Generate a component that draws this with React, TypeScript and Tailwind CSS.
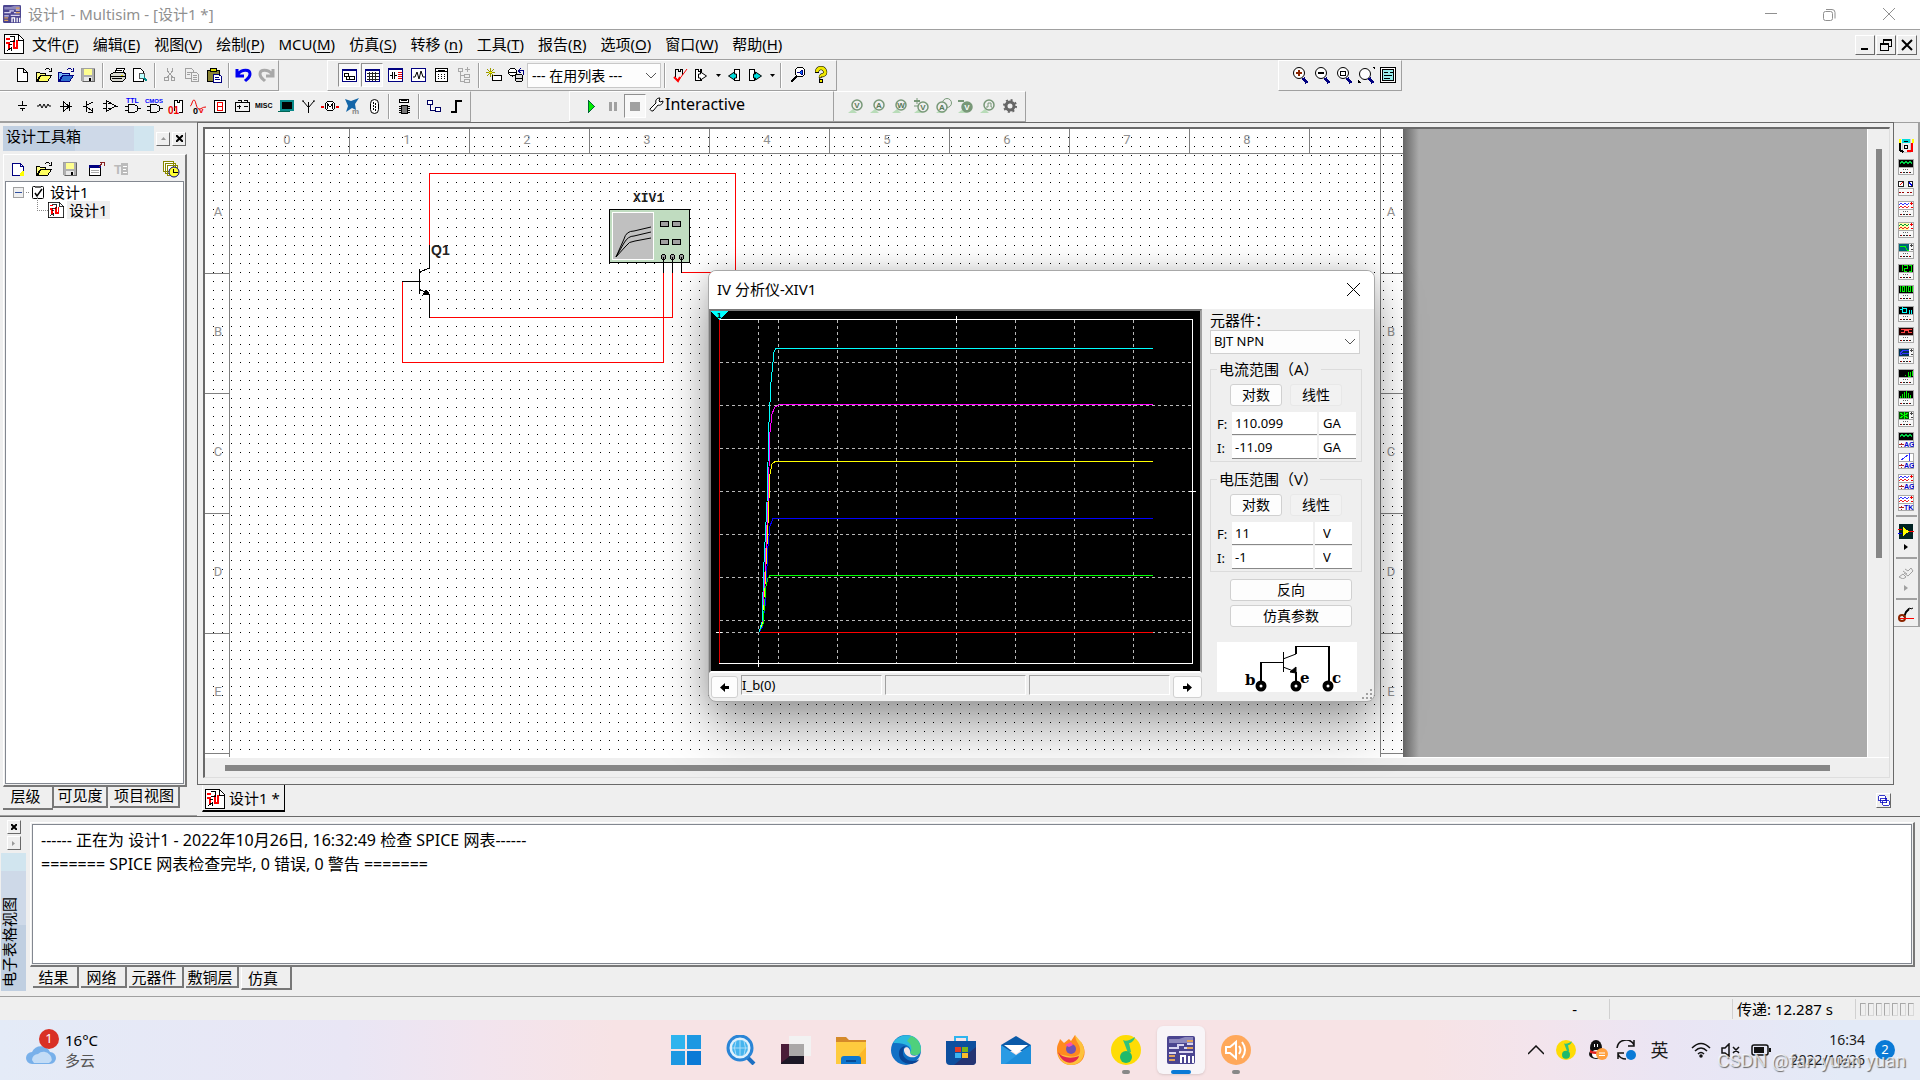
import React, { useState } from 'react';

type IconMap = Record<string, React.ReactNode>;

const pixelText = { fontFamily: 'Liberation Sans, sans-serif', fontWeight: 700, stroke: 'none' };

// All toolbar glyphs share an 18x18 box
const icons: IconMap = {
  new: <path d="M4.5 2.5h6l4 4v9h-10zM10.5 2.5v4h4" fill="#fff" />,
  newYellow: (
    <>
      <path d="M3.5 3.5h8l3 3v9h-11z" fill="#fff" stroke="#000080" />
      <path d="M11 16v-2l2-3h2v5z" fill="#ff0" stroke="none" />
      <path d="M11.5 3.5v3h3" stroke="#000080" />
    </>
  ),
  open: (
    <>
      <path d="M1.5 15.5v-9h3l1 1h5v3h-6z" fill="#ffff80" />
      <path d="M2.5 15.5l3-6h11l-4 6z" fill="#ffff60" />
      <path d="M9.5 4.5c2-3 4-3 6 0M16.5 2v3h-3" />
    </>
  ),
  openBlue: (
    <>
      <path d="M1.5 15.5v-9h3l1 1h7v3h-8z" fill="#7ab8f5" stroke="#000080" />
      <path d="M2.5 15.5l3-6h11l-4 6z" fill="#2f6fd0" stroke="#000080" />
      <path d="M9.5 4.5c2-3 4-3 6 0M16.5 2v3h-3" stroke="#000080" />
    </>
  ),
  save: (
    <>
      <path d="M2.5 2.5h13v13h-12l-1-1z" fill="#b0b0b0" stroke="#a0a0a0" />
      <path d="M5 3h8v6h-8z" fill="#ffff90" stroke="none" />
      <path d="M5 11h8v5h-8z" fill="#e8e8e8" stroke="none" />
      <path d="M10 12h2v3h-2z" fill="#000" stroke="none" />
      <path d="M15.5 3v12.5h-12" stroke="#606060" />
    </>
  ),
  print: (
    <>
      <path d="M5.5 7.5l2-5h8l-2 5z" fill="#fff" />
      <path d="M1.5 8.5l3-2h11l1 2v4l-3 3h-10l-2-2z" fill="#d8d8d0" />
      <path d="M7 4.5h6M6 6.5h6M2 10.5h14M3 12.5h10" />
      <path d="M12 9h2v1h-2z" fill="#dd0" stroke="none" />
    </>
  ),
  preview: (
    <>
      <path d="M2.5 2.5h7l3 3v10h-10z" fill="#fff" />
      <circle cx="11" cy="10" r="3" fill="#bff" stroke="#555" />
      <path d="M13 12l3 3" stroke="#088" strokeWidth="2" />
    </>
  ),
  cut: (
    <g stroke="#a0a0a0">
      <path d="M6.5 2v3l5 6M11.5 2v3l-5 6" />
      <circle cx="5.5" cy="13" r="2" />
      <circle cx="12" cy="13" r="2" />
    </g>
  ),
  copy: (
    <g stroke="#a0a0a0">
      <path d="M2.5 2.5h6l2 2v8h-8z" fill="#efefef" />
      <path d="M8.5 6.5h5l2 2v7h-7z" fill="#efefef" />
      <path d="M4 6.5h4M4 8.5h3M10 9.5h4M10 11.5h4M10 13.5h4" />
    </g>
  ),
  paste: (
    <>
      <path d="M2.5 4.5h12v11h-12z" fill="#8a8433" />
      <path d="M5.5 2.5h6v3h-6z" fill="#dd0" />
      <path d="M8.5 8.5h5l3 2v6h-8z" fill="#fff" stroke="#000080" />
      <path d="M10 11.5h4M10 13.5h5" stroke="#000080" />
    </>
  ),
  undo: <path d="M3 8c4-5 12-5 12 0 0 4-3 5-5 7M2 3v7h7" stroke="#0000f0" strokeWidth="3" shapeRendering="auto" />,
  redo: <path d="M15 8c-4-5-12-5-12 0 0 4 3 5 5 7M16 3v7h-7" stroke="#a8a8a8" strokeWidth="3" shapeRendering="auto" />,
  winTree: (
    <>
      <path d="M2.5 3.5h14v12h-14z" fill="#fff" stroke="#000080" />
      <path d="M2 3h15v2h-15z" fill="#000080" stroke="none" />
      <path d="M4.5 7.5h4v3h-4zM9.5 10.5h5v3h-5zM6.5 11v2h3" />
    </>
  ),
  winGrid: (
    <>
      <path d="M2.5 3.5h14v12h-14z" fill="#fff" stroke="#000080" />
      <path d="M2 3h15v2h-15z" fill="#000080" stroke="none" />
      <path d="M4 7.5h12M4 10.5h12M4 13.5h12M6.5 6v9M9.5 6v9M12.5 6v9" stroke="#222" />
    </>
  ),
  winPart: (
    <>
      <path d="M2.5 2.5h14v13h-14z" fill="#fff" stroke="#000080" />
      <path d="M2 2h15v2h-15z" fill="#000080" stroke="none" />
      <path d="M4 9.5h2M9 9.5h2M6.5 6v7M8.5 6v7" />
      <path d="M12 6.5h4M12 8.5h4M12 10.5h4M12 12.5h4" stroke="#e00" />
    </>
  ),
  winWave: (
    <>
      <path d="M2.5 2.5h14v13h-14z" fill="#fff" stroke="#000080" />
      <path d="M2 2h15v1h-15z" fill="#000080" stroke="none" />
      <path d="M4 11h2l2-5 2 7 2-8 2 6h2" shapeRendering="auto" />
    </>
  ),
  calc: (
    <>
      <path d="M3.5 2.5h12v13h-12z" fill="#fff" />
      <path d="M4 5.5h11M6 4h7" />
      <path d="M6 8.5h9M6 10.5h9M6 12.5h9" strokeDasharray="1 2" />
    </>
  ),
  hier: <path d="M3.5 2.5h4v3h-4zM5.5 6v9h4M5.5 9.5h4M9.5 8.5h5v3h-5zM9.5 13.5h5v3h-5zM12.5 1v5M10 3.5h5" stroke="#a8a8a8" />,
  sparkBox: (
    <>
      <path d="M7.5 9.5h9v5h-9z" fill="#fff" />
      <path d="M1 6.5h9M5.5 2v9M2 3l7 7M9 3l-7 7" stroke="#990" />
      <path d="M4 6.5h3" stroke="#ff0" />
    </>
  ),
  gears: (
    <>
      <circle cx="5.5" cy="6" r="4" fill="#fff" />
      <circle cx="12" cy="12" r="4" fill="#ddd" />
      <path d="M2 6.5h7M8 12.5h8" />
      <path d="M12 4.5h4v4M14 2l-3 3 3 2" stroke="#000080" />
    </>
  ),
  check: (
    <>
      <path d="M4.5 3v10M4 3.5h3v2h2v-2h3M11.5 3v6" />
      <path d="M4 11l3 4 9-12" stroke="#f00" shapeRendering="auto" />
      <path d="M3 11l4 4 2-4" stroke="#f00" strokeWidth="2" shapeRendering="auto" />
    </>
  ),
  fwd: (
    <>
      <path d="M2.5 3.5h3v2h2v-2h1v11h-6z" fill="#fff" />
      <path d="M7.5 6v2h-2v4h2v2l6-4z" fill="#fff" shapeRendering="auto" />
    </>
  ),
  back: (
    <>
      <path d="M9.5 3.5h5v11h-5z" fill="#fff" />
      <path d="M9.5 6v2h2v4h-2v2l-6-4z" fill="#0dd" shapeRendering="auto" />
    </>
  ),
  fwdCyan: (
    <>
      <path d="M2.5 3.5h5v11h-5z" fill="#fff" />
      <path d="M8.5 6v2h-2v4h2v2l6-4z" fill="#0dd" shapeRendering="auto" />
    </>
  ),
  find: (
    <>
      <circle cx="11" cy="6" r="5" fill="#fff" />
      <path d="M8 10l-6 6" strokeWidth="2" />
      <path d="M8 6.5h2l3-2v4l-3-2" stroke="#000080" fill="#06f" />
    </>
  ),
  help: (
    <>
      <path d="M5 7V5q1-3 4-3t4 3-2 4-2 3" stroke="#000" strokeWidth="4" shapeRendering="auto" />
      <path d="M7 13h4v4H7z" fill="#000" stroke="none" />
      <path d="M5 6V5q1-3 4-3t4 3-2 4-2 2" stroke="#f0e800" strokeWidth="3" shapeRendering="auto" />
      <path d="M8 14h2v2H8z" fill="#f0e800" stroke="none" />
    </>
  ),
  zoomIn: (
    <>
      <circle cx="8" cy="7" r="5.5" fill="#fff" shapeRendering="auto" />
      <path d="M12 12l4 5" stroke="#000080" strokeWidth="3" />
      <path d="M5 7h6M8 4v6" stroke="#8b2500" strokeWidth="2" />
    </>
  ),
  zoomOut: (
    <>
      <circle cx="8" cy="7" r="5.5" fill="#fff" shapeRendering="auto" />
      <path d="M12 12l4 5" stroke="#000080" strokeWidth="3" />
      <path d="M5 7h6" strokeWidth="2" />
    </>
  ),
  zoomArea: (
    <>
      <circle cx="8" cy="7" r="5.5" fill="#fff" shapeRendering="auto" />
      <path d="M12 12l4 5" stroke="#000080" strokeWidth="3" />
      <path d="M5.5 5.5h5v4h-5z" />
    </>
  ),
  zoomFit: (
    <>
      <circle cx="8" cy="8" r="5.5" fill="#fff" shapeRendering="auto" />
      <path d="M12 12l4 5" stroke="#000080" strokeWidth="3" />
      <path d="M15 1h3v3zM1 14v3h3z" fill="#000" stroke="none" />
    </>
  ),
  sheet: (
    <>
      <path d="M1.5 1.5h15v15h-15z" fill="#fff" />
      <path d="M3.5 3.5h11v11h-11z" fill="#9ee" />
      <path d="M5 6.5h4M5 9.5h8M5 12.5h6M11 6.5h3" />
    </>
  ),
  source: <path d="M9.5 4v4M5 8.5h9M7 11.5h5M9.5 12v2" />,
  resistor: <path d="M2 9h2l1-2 2 4 2-4 2 4 2-4 1 2h2" shapeRendering="auto" />,
  diode: <path d="M3 9.5h12M6.5 5v9l6-4.5zM12.5 5v9" />,
  transistor: <path d="M4 9.5h3M7.5 4v11M8 8l6-3M8 10l5 4M13 11v4h-4" />,
  opamp: <path d="M5.5 3.5v11l9-5.5zM2 6.5h3M2 11.5h3M14 9h3M7 6.5h2M7 11.5h2" />,
  ttl: (
    <>
      <path d="M5.5 7.5h4c7 0 7 8 0 8h-4zM2 9.5h3M2 13.5h3M15 11.5h3" />
      <text x="3" y="6" fontSize="7" fill="#00f" style={pixelText}>TTL</text>
    </>
  ),
  cmos: (
    <>
      <path d="M5.5 7.5h4c7 0 7 8 0 8h-4zM2 9.5h3M2 13.5h3M15 11.5h3" />
      <text x="0" y="6" fontSize="6" fill="#00f" style={pixelText}>CMOS</text>
    </>
  ),
  digital: (
    <>
      <path d="M7.5 14v-11h3v2h2v-2h3v12h-4" fill="#fff" />
      <text x="1" y="17" fontSize="10" fill="#e00" style={pixelText}>01</text>
    </>
  ),
  mixed: (
    <>
      <path d="M1 9c2 0 2-6 4-6s2 9 5 9 3-2 7-2" stroke="#e00" shapeRendering="auto" />
      <text x="4" y="17" fontSize="9" fill="#000" style={pixelText}>0</text>
      <text x="10" y="16" fontSize="8" fill="#e00" style={pixelText}>v</text>
    </>
  ),
  indicator: (
    <>
      <path d="M3.5 3.5h11v12h-11z" fill="#fff" />
      <path d="M6.5 5.5h5v8h-5zM6.5 9.5h5" stroke="#e00" />
    </>
  ),
  power: <path d="M2.5 5.5h14v9h-14zM5 3.5h3v2M11 3.5h3v2M4 9.5h4M11 9.5h4M6.5 8v4" />,
  misc: <text x="0" y="11" fontSize="7" fill="#000" style={pixelText}>MISC</text>,
  periph: (
    <>
      <path d="M4 4h12v9h-12z" fill="#000" stroke="#0a8a8a" strokeWidth="2" />
      <path d="M1 14h12v1h-12z" fill="#065" stroke="none" />
    </>
  ),
  rf: <path d="M9.5 5v11M4 4l5 6M15 4l-5 6M3 4h2M14 4h2" shapeRendering="auto" />,
  motor: (
    <>
      <circle cx="9" cy="9" r="5" fill="#fff" />
      <path d="M0 9.5h3M15 9.5h3" stroke="#e00" strokeWidth="2" />
      <path d="M6.5 12v-5l2.5 3 2.5-3v5" />
    </>
  ),
  ni: (
    <>
      <path d="M2 2l6 2 8-3-4 6 1 6-4-2-6 4 2-6z" fill="#1466a8" stroke="none" shapeRendering="auto" />
      <text x="9" y="17" fontSize="8" fill="#888" style={pixelText}>m</text>
    </>
  ),
  connector: (
    <>
      <rect x="5.5" y="2.5" width="8" height="14" rx="4" fill="#fff" shapeRendering="auto" />
      <path d="M8.5 5v9M10.5 6v9" strokeDasharray="2 1" />
    </>
  ),
  mcu: (
    <>
      <path d="M4.5 2.5h9v3h-9z" fill="#fff" />
      <path d="M6.5 8.5h6v8h-6z" fill="#777" />
      <path d="M4 9.5h3M4 11.5h3M4 13.5h3M4 15.5h3M12 9.5h3M12 11.5h3M12 13.5h3M12 15.5h3M6 3.5h6" />
    </>
  ),
  block: <path d="M2.5 3.5h5v4h-5zM5.5 8v5h4M10.5 10.5h5v4h-5z" fill="#fff" stroke="#000060" />,
  bus: <path d="M4 15h5v-11h6" strokeWidth="2" />,
  play: <path d="M6.5 3.5v12l6-6z" fill="#0e0" stroke="#063" />,
  pause: <path d="M5 5h3v9h-3zM10 5h3v9h-3z" fill="#a0a0a0" stroke="none" />,
  stop: <path d="M4 5h10v9h-10z" fill="#a0a0a0" stroke="none" />,
  wrench: <path d="M3 14l6-6c-1-3 1-5 4-5l-1 3 1 1 3-1c0 3-3 5-5 4l-5 6c-2 0-3-1-3-2z" fill="#fff" shapeRendering="auto" />,
  exportBox: (
    <>
      <path d="M2.5 5.5h11v10h-11z" fill="#fff" />
      <path d="M2 5h12v3h-12z" fill="#000080" stroke="none" />
      <path d="M4 10.5h8M4 12.5h8" stroke="#aaa" />
      <path d="M12 7l4-5M13 2.5h4v3" stroke="#822" />
    </>
  ),
  rename: (
    <>
      <text x="1" y="14" fontSize="13" fill="#bbb" style={pixelText}>T</text>
      <path d="M8 3h7v12h-7z" fill="#bbb" stroke="none" />
      <path d="M10 6.5h4M10 9.5h3M10 12.5h4" stroke="#fff" />
    </>
  ),
  history: (
    <>
      <path d="M1.5 1.5h10v10h-10zM3.5 3.5h10v10h-10zM5.5 5.5h10v10h-10z" fill="#fff" stroke="#880" />
      <circle cx="12" cy="12" r="5" fill="#ff3" stroke="#000080" shapeRendering="auto" />
      <path d="M11.5 9v3.5h4" />
    </>
  ),
  cascade: <path d="M2.5 2.5h8v6h-8zM4.5 5.5h8v6h-8zM7.5 8.5h8v6h-8z" fill="#fff" stroke="#0000c0" />,
};

const Icon = ({ name, size = 18 }: { name: string; size?: number }) => (
  <svg width={size} height={size} viewBox="0 0 18 18" fill="none" stroke="#000" shapeRendering="crispEdges" aria-hidden="true" className="shrink-0">
    {icons[name]}
  </svg>
);

const DocIcon = ({ size = 20 }: { size?: number }) => (
  <svg width={size} height={size} viewBox="0 0 20 20" fill="none" shapeRendering="crispEdges" aria-hidden="true" className="shrink-0">
    <path d="M.5.5h14l5 5v14H.5z" fill="#fff" stroke="#000" />
    <path d="M14.5 1v5h5" stroke="#000" />
    <path d="M2 4.5h4M10 6v8h3V6M2 9h3v6" stroke="#f00" strokeWidth="2" />
    <path d="M5.5 2.5h5v5h-5M8 10.5h-3M3 17l4-3v3" stroke="#000" />
  </svg>
);

const AppLogo = ({ size = 18 }: { size?: number }) => (
  <svg width={size} height={size} viewBox="0 0 28 28" aria-hidden="true" className="shrink-0">
    <rect width="28" height="28" rx="2" fill="#4b4590" />
    <path d="M2 3h10l6-2h8v6H2z" fill="#8d88bd" />
    <path d="M2 12h9V9h6M17 12h9M2 17h7M20 8h6M12 16h14" stroke="#d8d4f0" strokeWidth="2" fill="none" />
    <path d="M14 27v-7h4v7M22 27v-7M26 27v-7" stroke="#fff" strokeWidth="2" fill="none" />
    <path d="M20 5h6M2 24h6M2 20h6M20 12h6" stroke="#e0a35a" strokeWidth="2" />
  </svg>
);

const Sep = () => <span className="mx-[3px] h-[25px] w-[2px] shrink-0 border-l border-[#a0a0a0] border-r border-r-white" />;

interface ToolButtonProps {
  name: string;
  pressed?: boolean;
}

const ToolButton: React.FC<ToolButtonProps> = ({ name, pressed }) => (
  <button
    aria-label={name}
    className={`flex h-6 w-[22px] shrink-0 items-center justify-center ${
      pressed ? 'border border-[#909090] border-r-white border-b-white bg-[#f8f8f8]' : ''
    }`}
  >
    <Icon name={name} />
  </button>
);

const Arrow = () => (
  <button aria-label="more" className="flex w-[10px] justify-center">
    <svg width="5" height="3" viewBox="0 0 5 3"><path d="M0 0h5L2.5 3z" /></svg>
  </button>
);

const Strip = ({ names }: { names: string[] }) => (
  <>
    {names.map((n, i) => (n === '|' ? <Sep key={i} /> : <ToolButton key={i} name={n} />))}
  </>
);

const barBase = 'flex h-full items-center border-r border-b border-[#a0a0a0] border-t border-t-white pb-px';

const menus: [string, string][] = [
  ['文件', 'F'], ['编辑', 'E'], ['视图', 'V'], ['绘制', 'P'], ['MCU', 'M'], ['仿真', 'S'],
  ['转移 ', 'n'], ['工具', 'T'], ['报告', 'R'], ['选项', 'O'], ['窗口', 'W'], ['帮助', 'H'],
];

const bevel = 'border border-white border-r-[#696969] border-b-[#696969] bg-[#efefef]';

const TitleBar = () => (
  <header className="flex h-[29px] shrink-0 items-center bg-white pb-px pl-[3px] text-[15px] text-[#909090]">
    <AppLogo />
    <h1 className="ml-[7px] flex-1">设计1 - Multisim - [设计1 *]</h1>
    <div className="flex">
      <button aria-label="最小化" className="flex w-[58px] justify-center">
        <svg width="12" height="12"><path d="M0 5.5h12" stroke="#909090" /></svg>
      </button>
      <button aria-label="还原" className="flex w-[58px] justify-center">
        <svg width="13" height="13" fill="none" stroke="#909090">
          <rect x=".5" y="3.5" width="9" height="9" rx="2" />
          <path d="M3 1.5h6a3 3 0 0 1 3 3v6" />
        </svg>
      </button>
      <button aria-label="关闭" className="flex w-[62px] justify-center">
        <svg width="12" height="12" stroke="#909090"><path d="M0 0l12 12M12 0L0 12" /></svg>
      </button>
    </div>
  </header>
);

const MenuBar = () => (
  <nav className="flex h-[31px] shrink-0 items-center border-t border-b border-[#a0a0a0] pr-[3px] pb-px pl-1 text-[15px]">
    <DocIcon />
    <div className="ml-2 flex flex-1 gap-[14px]">
      {menus.map(([label, key]) => (
        <button key={key} className="whitespace-pre">
          {label}(<span className="underline underline-offset-2">{key}</span>)
        </button>
      ))}
    </div>
    <div className="mt-[2px] flex gap-px">
      <button aria-label="最小化文档" className={`flex size-5 items-center justify-center ${bevel}`}>
        <svg width="12" height="12"><path d="M2 9h7v2h-7z" /></svg>
      </button>
      <button aria-label="还原文档" className={`flex size-5 items-center justify-center ${bevel}`}>
        <svg width="14" height="12" fill="none" stroke="#000" shapeRendering="crispEdges">
          <path d="M4.5 5V1.5h8V7H9.5M1.5 5.5h8v6h-8z" />
          <path d="M4 1h9M1 5h9" strokeWidth="2" />
        </svg>
      </button>
      <button aria-label="关闭文档" className={`flex size-5 items-center justify-center ${bevel}`}>
        <svg width="12" height="12" stroke="#000" strokeWidth="2"><path d="M1 1l10 10M11 1L1 11" /></svg>
      </button>
    </div>
  </nav>
);

const Toolbars = () => (
  <div className="shrink-0">
    <div className="flex h-[31px]">
      <div className={`${barBase} pr-px pl-[11px]`}>
        <Strip names={['new', 'open', 'openBlue', 'save', '|', 'print', 'preview', '|', 'cut', 'copy', 'paste', '|', 'undo', 'redo']} />
      </div>
      <div className={`${barBase} ml-12 border-l border-l-white pr-1 pl-[10px]`}>
        <div className="flex gap-px">
          <ToolButton name="winTree" pressed />
          <ToolButton name="winGrid" pressed />
          <Strip names={['winPart', 'winWave', 'calc', 'hier']} />
        </div>
        <Sep />
        <Strip names={['sparkBox', 'gears']} />
        <div className="relative">
          <select aria-label="在用列表" className="h-[25px] w-[134px] appearance-none border border-[#c8c8c8] bg-[#fdfdfd] pl-1 text-[14px]">
            <option>--- 在用列表 ---</option>
          </select>
          <svg width="10" height="6" fill="none" stroke="#555" className="pointer-events-none absolute top-[10px] right-[5px]"><path d="M0 0l5 5 5-5" /></svg>
        </div>
        <Sep />
        <Strip names={['check', 'fwd']} />
        <Arrow />
        <Strip names={['back', 'fwdCyan']} />
        <Arrow />
        <Sep />
        <div className="flex gap-px pl-[2px]">
          <Strip names={['find', 'help']} />
        </div>
      </div>
      <div className="flex-1" />
      <div className={`${barBase} mr-[518px] border-l border-l-white pr-[2px] pl-[10px]`}>
        <Strip names={['zoomIn', 'zoomOut', 'zoomArea', 'zoomFit', 'sheet']} />
      </div>
    </div>
    <div className="flex h-[31px]">
      <div className={`${barBase} pr-[3px] pl-[11px]`}>
        <Strip
          names={['source', 'resistor', 'diode', 'transistor', 'opamp', 'ttl', 'cmos', 'digital', 'mixed', 'indicator', 'power', 'misc', 'periph', 'rf', 'motor', 'ni', 'connector', '|', 'mcu', '|', 'block', 'bus']}
        />
      </div>
      <div className={`${barBase} ml-[98px] w-[265px] border-l border-l-white pl-[10px]`}>
        <Strip names={['play', 'pause']} />
        <ToolButton name="stop" pressed />
        <button className="ml-px flex items-center pb-1 text-[16px] leading-5">
          <Icon name="wrench" />
          Interactive
        </button>
      </div>
      <div className={`${barBase} pr-1 pl-[11px]`}>
        {['V', 'A', 'W', '±V', 'AV', '−V', 'Л'].map(p => (
          <button key={p} aria-label={`探针 ${p}`} className="flex w-[22px] justify-center">
            <svg width="16" height="16" viewBox="0 0 16 16" fill="none" stroke="#789878">
              <path d="M0 15l5-4 4 4z" fill="#b8dcb8" stroke="none" />
              {p === 'AV' && <circle cx="11" cy="5" r="4.5" />}
              <circle cx={p === 'AV' ? 6 : 9} cy={p.length > 1 ? 9 : 7} r="5" strokeWidth="1.5" fill={p === '−V' ? '#789878' : '#efefef'} />
              {p.length > 1 && p !== 'AV' && <path d="M0 3h6" strokeWidth="2" />}
              {p === '±V' && <path d="M3 0v6M0 8h4" />}
              {p === 'Л' ? (
                <path d="M6 9h2V5h3v4h1" />
              ) : (
                <text x={p === 'AV' ? 6 : 9} y={p.length > 1 ? 12 : 10} fontSize="8" textAnchor="middle" fill={p === '−V' ? '#fff' : '#587858'} style={pixelText}>
                  {p === 'AV' ? 'A' : p.slice(-1)}
                </text>
              )}
            </svg>
          </button>
        ))}
        <button aria-label="探针设置" className="flex w-[22px] justify-center">
          <svg width="16" height="16" viewBox="0 0 16 16" fill="none" stroke="#666">
            <circle cx="8" cy="8" r="4" strokeWidth="3" />
            <circle cx="8" cy="8" r="6" strokeWidth="2" strokeDasharray="2 2.7" />
          </svg>
        </button>
      </div>
    </div>
  </div>
);

const DesignToolbox = () => (
  <aside className="flex w-[197px] shrink-0 flex-col border-t border-b border-[#a0a0a0] pt-[3px] pl-[3px] text-[15px]">
    <div className="flex h-[25px] items-center gap-[2px]">
      <h2 className="h-full w-[151px] bg-[linear-gradient(90deg,#c0cfe1_0_48%,#ced9e8_48%_87%,#d1e5ef_87%)] pl-[3px] leading-5">设计工具箱</h2>
      <button aria-label="折叠" className={`flex h-[14px] w-[14px] items-center justify-center ${bevel}`}>
        <svg width="5" height="3"><path d="M0 3h5L2.5 0z" fill="#999" /></svg>
      </button>
      <button aria-label="关闭工具箱" className={`flex h-[14px] w-[14px] items-center justify-center ${bevel}`}>
        <svg width="7" height="7" stroke="#000" strokeWidth="2"><path d="M0 0l7 7M7 0L0 7" /></svg>
      </button>
    </div>
    <div className="mt-[3px] mr-[10px] flex min-h-0 flex-1 flex-col border border-white border-r-2 border-b-2 border-r-[#787878] border-b-[#787878] px-px pb-px">
      <div className="flex h-[26px] items-center gap-2 px-1 pt-[2px]">
        {['newYellow', 'open', 'save', 'exportBox', 'rename'].map(n => (
          <button key={n} aria-label={n}><Icon name={n} /></button>
        ))}
        <button aria-label="history" className="ml-auto"><Icon name="history" /></button>
      </div>
      <ul className="flex-1 border border-[#828790] bg-white pt-px pl-[7px] leading-[18px]">
        <li>
          <div className="flex items-center">
            <button aria-label="收起" className="flex size-[11px] items-center justify-center border border-[#a0a0a0] bg-[#efefef]">
              <span className="h-px w-[7px] bg-[#3050a0]" />
            </button>
            <span className="mx-[2px] w-[3px] border-t border-dotted border-[#888]" />
            <svg width="14" height="16" fill="none" stroke="#000" className="mr-[5px]">
              <rect x="1.5" y="2.5" width="11" height="12" rx="1" />
              <path d="M4 3h6" strokeWidth="2" stroke="#666" />
              <path d="M4 9l2 3 5-7" strokeWidth="1.5" />
            </svg>
            设计1
          </div>
          <ul className="ml-6">
            <li className="flex items-center">
              <span className="-mt-3 h-[14px] w-[11px] border-b border-l border-dotted border-[#888]" />
              <DocIcon size={16} />
              <span className="ml-[3px] bg-[#efefef] px-[2px]">设计1</span>
            </li>
          </ul>
        </li>
      </ul>
    </div>
    <div className="flex h-[28px] items-start">
      <button className="h-[23px] w-[50px] border-r border-b-2 border-[#787878] pr-1 pb-[3px] leading-[18px]">层级</button>
      <button className="h-[21px] w-[55px] border border-t-0 border-r-2 border-b-2 border-[#787878] pb-[3px] leading-4">可见度</button>
      <button className="ml-[2px] h-[21px] w-[70px] border-r-2 border-b-2 border-[#787878] pb-[3px] leading-4">项目视图</button>
    </div>
  </aside>
);

const cols = [0, 1, 2, 3, 4, 5, 6, 7, 8];
const rows = ['A', 'B', 'C', 'D', 'E'];

const Schematic = () => (
  <svg width="1198" className="h-full shrink-0 bg-white" shapeRendering="crispEdges" fill="none">
    <defs>
      <pattern id="dots" x="8" y="8" width="9" height="9" patternUnits="userSpaceOnUse">
        <rect width="1" height="1" fill="#000" />
      </pattern>
    </defs>
    <rect width="100%" height="100%" fill="url(#dots)" />
    <g stroke="#808080">
      <path d="M0 24.5h1198M24.5 0v2000M1175.5 0v2000" />
      {cols.map(c => <path key={c} d={`M${144.5 + c * 120} 0v24`} />)}
      {rows.map((r, i) => <path key={r} d={`M0 ${144.5 + i * 120}h24M1175 ${144.5 + i * 120}h23`} />)}
    </g>
    <g fill="#909090" fontFamily="Roboto, sans-serif" fontSize="13" textAnchor="middle">
      {cols.map(c => <text key={c} x={82 + c * 120} y="15">{c}</text>)}
      {rows.map((r, i) => (
        <React.Fragment key={r}>
          <text x="13" y={87 + i * 120}>{r}</text>
          <text x="1186" y={87 + i * 120}>{r}</text>
        </React.Fragment>
      ))}
    </g>
    {/* wires */}
    <g stroke="#f00">
      <path d="M224.5 116v-71.5h306v100" />
      <path d="M476.5 143.5h60" />
      <path d="M224.5 188.5h243v-45" />
      <path d="M197.5 153v80.5h261v-90" />
    </g>
    {/* Q1 */}
    <g stroke="#000">
      <path d="M224.5 116v23l-10 4M214.5 140v25M197 152.5h17M214 160l10 5v24" />
      <path d="M218 166l6-1-3-4z" fill="#000" />
    </g>
    <text x="226" y="126" fontFamily="Liberation Sans, sans-serif" fontSize="14" fontWeight="700" fill="#222">Q1</text>
    {/* XIV1 */}
    <text x="428" y="73" fontFamily="Liberation Mono, monospace" fontSize="13" fontWeight="700" fill="#222">XIV1</text>
    <rect x="404.5" y="80.5" width="80" height="53" fill="#c0dcc0" stroke="#000" />
    <rect x="407.5" y="83.5" width="41" height="47" fill="#c0c0c0" stroke="#fff" />
    <g stroke="#000" shapeRendering="auto">
      <path d="M411 128l8-18q2-8 10-8l17-4M411 128l8-14q4-7 10-7l17-4M411 128l9-10q4-6 10-6l16-3" />
    </g>
    <g stroke="#000" fill="#a0a0a0">
      {[92.5, 110.5].map(y => (
        <React.Fragment key={y}>
          <rect x="455.5" y={y} width="8" height="5" />
          <rect x="467.5" y={y} width="8" height="5" />
        </React.Fragment>
      ))}
      {[458.5, 467.5, 476.5].map(x => (
        <React.Fragment key={x}>
          <circle cx={x} cy="128" r="2.5" />
          <path d={`M${x} 128v16`} />
        </React.Fragment>
      ))}
    </g>
  </svg>
);

const traces = [
  { color: '#00f', d: 'M48 321l3-4 3-22 3-60 2-20 3-7.5H442' },
  { color: '#0f0', d: 'M48 321l4-8 3-38 2-8 2-2.5H442' },
  { color: '#ff0', d: 'M48 321l3-8 3-40 3-60 2-50 2-10 3-2.5H442' },
  { color: '#f0f', d: 'M48 321l3-10 3-50 3-70 2-70 2-18 3-7 5-2.5H442' },
  { color: '#0ff', d: 'M48 321l3-10 2-60 3-60 2-80 2-40 3-30 2-3.5H442' },
  { color: '#f00', d: 'M49 321.5H442' },
];

const Graph = () => (
  <svg width="489" height="360" className="bg-black" fill="none" shapeRendering="crispEdges">
    <g stroke="#b8b8b8" strokeDasharray="3 3">
      {[47.5, 67.5, 126.5, 185.5, 245.5, 304.5, 363.5, 422.5].map(x => <path key={x} d={`M${x} 9v343`} />)}
      {[51.5, 94.5, 137.5, 180.5, 223.5, 266.5, 309.5, 321.5].map(y => <path key={y} d={`M9 ${y}h472`} />)}
    </g>
    <path d="M8 8.5h473.5v344H8M245.5 5v7M478 180.5h7M5 321.5h6M47.5 349v7" stroke="#fff" />
    {traces.map(t => <path key={t.color} d={t.d} stroke={t.color} />)}
    <path d="M8.5 9v343" stroke="#e00000" />
    <path d="M0 0h17l-8.5 9z" fill="#0ff" />
    <text x="6" y="7" fontSize="8" fill="#000" style={pixelText}>1</text>
  </svg>
);

const dlgButton = 'h-[22px] rounded-[3px] border border-[#d0d0d0] bg-[#fdfdfd] text-[14px] leading-[18px]';
const dlgInput = 'h-[23px] min-w-0 border-b border-[#888] bg-white text-[13px]';

interface RangeGroupProps {
  title: string;
  unit: string;
  from: string;
  to: string;
  width: string;
}

const RangeGroup: React.FC<RangeGroupProps> = ({ title, unit, from, to, width }) => (
  <fieldset className="mb-[7px] h-[103px] w-[152px] border border-[#dcdcdc] pl-[6px]">
    <legend className="px-[2px] text-[15px] leading-5">{title}</legend>
    <div className="mt-[5px] ml-[13px] flex gap-2">
      <button className={`${dlgButton} w-[52px]`}>对数</button>
      <button className="h-[22px] w-[52px] rounded-[3px] border border-[#e8e8e8] bg-[#f2f2f2] text-[14px] leading-[18px]">线性</button>
    </div>
    {[['F:', from], ['I:', to]].map(([label, value], i) => (
      <div key={label} className={`flex gap-[2px] ${i === 0 ? 'mt-[6px]' : 'mt-px'}`}>
        <label htmlFor={title + label} className="w-[13px] pt-[2px] text-[13px] leading-5">{label}</label>
        <input id={title + label} defaultValue={value} className={`${dlgInput} ${width} pl-[3px]`} />
        <input aria-label={`${label} 单位`} defaultValue={unit} className={`${dlgInput} w-[37px] ${unit === 'V' ? 'pl-2' : 'pl-1'}`} />
      </div>
    ))}
  </fieldset>
);

const Analyzer = () => {
  const [open, setOpen] = useState(true);
  if (!open) return null;
  return (
    <section
      role="dialog"
      aria-label="IV 分析仪-XIV1"
      className="absolute top-[141px] left-[503px] w-[667px] overflow-hidden rounded-lg border border-[#a8a8a8] bg-[#efefef] shadow-[0_26px_50px_rgba(0,0,0,0.36),0_0_24px_rgba(0,0,0,0.16)]"
    >
      <div className="flex h-[38px] items-center justify-between bg-white pr-[14px] pb-px pl-2 text-[15px]">
        IV 分析仪-XIV1
        <button aria-label="关闭" onClick={() => setOpen(false)}>
          <svg width="13" height="13" stroke="#000"><path d="M0 0l13 13M13 0L0 13" /></svg>
        </button>
      </div>
      <div className="flex">
        <div>
          <div className="border-2 border-[#787878] border-r-[#a0a0a0] border-b-white">
            <Graph />
          </div>
          <div className="flex h-[28px] items-start gap-[3px] pt-[2px] pl-[2px] text-[13px]">
            <button aria-label="上一条" className={`${dlgButton} mt-px flex h-[18px] w-[27px] items-center justify-center`}>
              <svg width="9" height="9"><path d="M0 4.5l5-4.5v3h4v3h-4v3z" /></svg>
            </button>
            {['I_b(0)', '', ''].map((t, i) => (
              <div key={i} className="h-5 flex-1 border border-[#a0a0a0] border-r-white border-b-white leading-[18px]">{t}</div>
            ))}
            <button aria-label="下一条" className={`${dlgButton} mt-px flex h-[18px] w-[29px] items-center justify-center`}>
              <svg width="9" height="9"><path d="M9 4.5l-5-4.5v3h-4v3h4v3z" /></svg>
            </button>
          </div>
        </div>
        <div className="pt-px pl-2">
          <label htmlFor="component" className="block text-[15px] leading-5">元器件：</label>
          <div className="relative mb-[5px] w-[150px]">
            <select id="component" className="block h-6 w-full appearance-none border border-[#d0d0d0] bg-[#fdfdfd] pl-[3px] text-[13px]">
              <option>BJT NPN</option>
            </select>
            <svg width="10" height="6" fill="none" stroke="#555" className="pointer-events-none absolute top-[9px] right-[5px]"><path d="M0 0l5 5 5-5" /></svg>
          </div>
          <RangeGroup title="电流范围（A）" unit="GA" from="110.099" to="-11.09" width="w-[85px]" />
          <RangeGroup title="电压范围（V）" unit="V" from="11" to="-1" width="w-[81px]" />
          <div className="ml-5 flex w-[122px] flex-col gap-1">
            <button className={dlgButton}>反向</button>
            <button className={dlgButton}>仿真参数</button>
          </div>
          <svg width="140" height="50" fill="none" stroke="#000" className="mt-[15px] ml-[7px] bg-white">
            <path d="M44 40V20.5h22M79 12V4.5h33V40M79 30v10" strokeWidth="1.5" shapeRendering="crispEdges" />
            <path d="M66.5 10v20M66 17l13-5M66 25l13 5" />
            <path d="M73 30l6 1v-6z" fill="#000" />
            {[44, 79, 111].map(x => <circle key={x} cx={x} cy="44" r="3.5" strokeWidth="4" />)}
            <g fill="#000" stroke="none" fontFamily="DejaVu Serif, serif" fontWeight="700" fontSize="15">
              <text x="28" y="43">b</text>
              <text x="83" y="41">e</text>
              <text x="115" y="41">c</text>
            </g>
          </svg>
        </div>
      </div>
      <svg width="10" height="10" fill="#a0a0a0" className="absolute right-[2px] bottom-[2px]">
        <path d="M8 0h2v2h-2zM4 4h2v2h-2zM8 4h2v2h-2zM0 8h2v2h-2zM4 8h2v2h-2zM8 8h2v2h-2z" />
      </svg>
    </section>
  );
};

const Workspace = () => (
  <main className="flex min-w-0 flex-1 flex-col">
    <div className="flex min-h-0 flex-1 flex-col border border-[#696969] pt-1 pr-[3px] pb-[6px] pl-[5px]">
      <div className="relative flex min-h-0 flex-1 flex-col border-t-2 border-r border-b border-l-2 border-[#696969] border-r-[#dedede] border-b-[#dedede]">
        <div className="flex min-h-0 flex-1">
          <div className="flex min-w-0 flex-1 overflow-hidden bg-[#ababab]">
            <Schematic />
            <div className="w-4 bg-linear-to-r from-[#666] to-[#ababab]" />
          </div>
          <div className="w-[22px] border-l border-white pt-5 pb-[199px] pl-2">
            <div className="h-full w-[6px] bg-[#868686]" />
          </div>
        </div>
        <div className="h-5 border-t border-white pt-[7px] pr-[59px] pl-5">
          <div className="h-[6px] bg-[#868686]" />
        </div>
        <Analyzer />
      </div>
    </div>
    <div className="flex h-[31px] items-start justify-between pr-[3px] pl-[5px]">
      <button className="flex h-[27px] items-center gap-1 border-r border-b-2 border-l border-black border-l-white pt-[2px] pr-1 pl-[2px] text-[15px]">
        <DocIcon />
        设计1 *
      </button>
      <button aria-label="cascade" className={`mt-2 flex size-[15px] items-center justify-center ${bevel}`}>
        <Icon name="cascade" size={14} />
      </button>
    </div>
  </main>
);

interface Instrument {
  id: string;
  bg: string;
  color: string;
  d: string;
  tag?: string;
}

const instruments: Instrument[] = [
  { id: '万用表', bg: '#efefef', color: '#f00', d: '' },
  { id: '函数发生器', bg: '#000', color: '#0c4', d: 'M2 5l2-3 2 3 2-3 2 3 2-3 2 3' },
  { id: '瓦特计', bg: '#fff', color: '#e00', d: 'M3 5l3-3M10 2l3 3' },
  { id: '示波器', bg: '#fff', color: '#33f', d: 'M1 4l2-2 2 2 2-2 2 2 2-2' },
  { id: '四通道示波器', bg: '#ffa', color: '#093', d: 'M1 4l2-2 2 2 2-2 2 2 2-2' },
  { id: '波特测试仪', bg: '#067', color: '#0f0', d: 'M2 3h5l2 4h2' },
  { id: '频率计数器', bg: '#000', color: '#0e0', d: 'M4 1v6M6 1.5h3v3h-3v3h3M11 1.5h2.5v6h-2.5' },
  { id: '字发生器', bg: '#000', color: '#0e0', d: 'M2.5 1v6M4.5 1.5h2v5h-2zM8.5 1v6M10.5 1.5h2v5h-2zM14.5 1v6' },
  { id: '逻辑转换仪', bg: '#000', color: '#0ff', d: 'M2 3.5h2M4.5 1v5h4v-4h-4M11 4v4M13.5 4v4' },
  { id: '逻辑分析仪', bg: '#200', color: '#f44', d: 'M3 2.5h11M3 5h3v-2h4v2h4' },
  { id: 'IV分析仪', bg: '#035', color: '#33f', d: 'M2 6c2-4 4-4 9-4M2 7c2-2 4-2 9-2' },
  { id: '失真分析仪', bg: '#000', color: '#0e0', d: 'M7 6.5h1M10 3v4h2v-4M14 2v5' },
  { id: '光谱分析仪', bg: '#000', color: '#0e0', d: 'M2.5 8v-2M4.5 8v-4M6.5 8v-6M8.5 8v-7M10.5 8v-5M12.5 8v-3' },
  { id: '网络分析仪', bg: '#050', color: '#0f0', d: 'M2 2l8 5M2 7l8-5M6 1v7' },
  { id: '安捷伦函数', bg: '#000', color: '#0c4', d: 'M2 5l2-3 2 3 2-3 2 3 2-3 2 3', tag: 'AG' },
  { id: '安捷伦万用表', bg: '#fff', color: '#33f', d: 'M3 7l7-5M11 0v8', tag: 'AG' },
  { id: '安捷伦示波器', bg: '#fff', color: '#33f', d: 'M1 4l2-2 2 2 2-2 2 2 2-2', tag: 'AG' },
  { id: '泰克示波器', bg: '#fff', color: '#33f', d: 'M1 4l2-2 2 2 2-2 2 2 2-2', tag: 'TK' },
];

const renderFace = (m: Instrument, i: number) => {
  if (i === 0) {
    return (
      <>
        <path d="M4 1h8v13h-8z" fill="#eee" stroke="#ccc" />
        <path d="M4 1h8v4h-8z" fill="#0dd" />
        <path d="M6 3.5h4" stroke="#000" />
        <circle cx="8" cy="9" r="2" stroke="#000" />
        <path d="M1.5 1v4M14.5 1v4" stroke="#ff0" strokeWidth="2" />
        <path d="M1.5 5v7l4 2" stroke="#000" strokeWidth="2" />
        <path d="M14 5v8h-5" stroke="#f00" strokeWidth="2" />
      </>
    );
  }
  if (i === 2) {
    return (
      <>
        <path d="M.5 8.5h15v7H.5z" fill="#f8f8f8" stroke="#a8a8a8" />
        <path d="M.5 1.5h5v5h-5zM10.5 1.5h4v5h-4z" fill="#fff" stroke="#222" />
        <path d="M2 5l3-3" stroke="#e00" />
        <path d="M11 2l3 4" stroke="#00e" />
        <path d="M1 12.5h6M9 12.5h6" stroke="#900" strokeDasharray="2 1" />
      </>
    );
  }
  // narrow screens leave room for the knobs
  const knobs = [3, 4, 5, 10, 13, 16, 17].includes(i);
  return (
    <>
      <path d="M.5.5h15v15H.5z" fill="#f8f8f8" stroke="#a8a8a8" />
      <path d={knobs ? 'M1 1h10v7H1z' : 'M1 1h14v7H1z'} fill={m.bg} />
      <path d={m.d} stroke={m.color} />
      {[3, 4, 16, 17].includes(i) && <path d="M1 7l2-2 2 2 2-2 2 2 2-2" stroke="#e22" />}
      {knobs && <path d="M12 2.5h3M13.5 1v3M13 6.5h2" stroke={i === 5 || i === 10 || i === 13 ? '#444' : '#e00'} />}
      <path d="M1 8.5h14" stroke="#aaa" />
      {m.tag ? (
        <>
          <path d="M1 12.5h5M3.5 11v4" stroke="#a22" strokeDasharray="2 1" />
          <text x="6" y="15" fontSize="7" fill="#00c" style={pixelText}>{m.tag}</text>
        </>
      ) : (
        <>
          <path d="M5 10.5h6" stroke="#666" strokeDasharray="1 1" />
          <path d="M2 13.5h12" stroke="#222" strokeDasharray="2 1" />
          <path d="M3 13.5h1M11 13.5h1" stroke="#c00" />
        </>
      )}
    </>
  );
};

const InstrumentBar = () => (
  <aside className="flex h-[505px] w-[26px] shrink-0 flex-col items-center border-t border-r-2 border-b border-[#a0a0a0] pt-3">
    {instruments.map((m, i) => (
      <button key={m.id} aria-label={m.id} className="flex h-[21px] w-5 shrink-0 items-center justify-center">
        <svg width="16" height="16" fill="none" shapeRendering="crispEdges">{renderFace(m, i)}</svg>
      </button>
    ))}
    <hr className="mt-[2px] w-[21px] border-t-2 border-[#a0a0a0]" />
    <button aria-label="LabVIEW 仪器" className="mt-[7px]">
      <svg width="16" height="15" shapeRendering="crispEdges">
        <path d="M1 0h14v15H1z" fill="#022" />
        <path d="M0 5h4v1H0z" fill="#f00" />
        <path d="M0 9h4v1H0z" fill="#00f" />
        <path d="M5 3v9l6-4.5z" fill="#ff0" />
        <path d="M11 7h5v1h-5z" fill="#f00" />
      </svg>
    </button>
    <svg width="4" height="6" className="mt-[5px]"><path d="M0 0v6l4-3z" /></svg>
    <hr className="mt-[7px] w-[21px] border-t-2 border-[#a0a0a0]" />
    <svg width="16" height="12" fill="none" stroke="#a0a0a0" className="mt-2"><path d="M1 10l4-3 3 3-3 2zM6 6l4 3 5-5-2-3-3 3-3-2M5 4l4 3" /></svg>
    <svg width="4" height="6" fill="#a0a0a0" className="mt-[6px]"><path d="M0 0v6l4-3z" /></svg>
    <hr className="mt-[7px] w-[21px] border-t-2 border-[#a0a0a0]" />
    <svg width="16" height="15" fill="none" className="mt-[7px]">
      <path d="M6 10l2-5 3-3" stroke="#000" strokeWidth="2" />
      <path d="M10 2l2-1 1 1 2-1" stroke="#000" />
      <circle cx="4" cy="11" r="3" stroke="#8b2500" strokeWidth="2" />
      <path d="M2 11.5h14" stroke="#f00" />
    </svg>
  </aside>
);

const sheetTabs = [
  { label: '结果', width: 'w-[46px]' },
  { label: '网络', width: 'w-[46px]' },
  { label: '元器件', width: 'w-[55px]' },
  { label: '敷铜层', width: 'w-[53px]' },
  { label: '仿真', width: 'w-[51px]' },
];

const Spreadsheet = () => {
  const [active, setActive] = useState('仿真');
  return (
    <section className="flex h-[180px] shrink-0 border-t border-[#696969] pt-[3px] text-[15px]">
      <div className="flex w-[30px] flex-col items-center pr-[3px]">
        <button aria-label="关闭视图" className={`flex h-[14px] w-[14px] items-center justify-center ${bevel}`}>
          <svg width="6" height="6" stroke="#000" strokeWidth="2"><path d="M0 0l6 6M6 0L0 6" /></svg>
        </button>
        <button aria-label="展开" className={`mt-[2px] flex h-[14px] w-[14px] items-center justify-center ${bevel}`}>
          <svg width="3" height="5"><path d="M0 0v5L3 2.5z" fill="#999" /></svg>
        </button>
        <div className="mt-[3px] flex h-[138px] w-[25px] bg-[linear-gradient(180deg,#d1e5ef_0_13%,#ced9e8_13%_52%,#c0cfe1_52%)] pb-1">
          <h2 className="w-[17px] rotate-180 leading-[17px] [writing-mode:vertical-rl] [text-orientation:sideways]">电子表格视图</h2>
        </div>
      </div>
      <div className="mt-[2px] mr-[5px] flex min-w-0 flex-1 flex-col">
        <div className="h-[145px] border border-white border-r-2 border-b-2 border-r-[#787878] border-b-[#787878] p-px">
          <div className="h-full border border-[#828790] bg-white px-2 pt-[3px] text-[16px] leading-6">
            <p>------ 正在为 设计1 - 2022年10月26日, 16:32:49 检查 SPICE 网表------</p>
            <p>======= SPICE 网表检查完毕, 0 错误, 0 警告 =======</p>
          </div>
        </div>
        <div className="flex items-start gap-[2px] pl-[3px] leading-[18px]">
          {sheetTabs.map(t => (
            <button
              key={t.label}
              onClick={() => setActive(t.label)}
              className={`${t.width} border-r-2 border-b-2 border-[#787878] ${
                t.label === active ? 'h-[23px] border-l border-l-white pr-[6px] leading-[22px]' : 'h-[21px] pr-[3px]'
              }`}
            >
              {t.label}
            </button>
          ))}
        </div>
      </div>
    </section>
  );
};

const StatusBar = () => (
  <footer className="flex h-[24px] shrink-0 items-center border-t border-[#a0a0a0] pt-px text-[15px] leading-5">
    <div className="flex-1 border-r border-[#d0d0d0] pr-8 text-right">-</div>
    <div className="h-5 w-[123px] border-r border-[#d0d0d0]" />
    <div className="w-[123px] border-r border-[#d0d0d0] pl-1">传递: 12.287 s</div>
    <div className="flex w-[64px] gap-[2px] pl-1">
      {cols.slice(0, 7).map(c => (
        <span key={c} className="h-[13px] w-[6px] border border-[#a8a8a8] border-r-[#d8d8d8] border-b-[#d8d8d8]" />
      ))}
    </div>
  </footer>
);

const MusicIcon = ({ size }: { size: number }) => (
  <svg width={size} height={size} viewBox="0 0 30 30">
    <circle cx="15" cy="15" r="15" fill="#fedc05" />
    <path d="M12 5c3 2 7 0 12-3-1 4-4 6-6 6l2 9-3 1-3-8z" fill="#31c27c" />
    <circle cx="15" cy="22" r="6" fill="#1fba6b" />
  </svg>
);

const apps: { id: string; state?: string; icon: React.ReactNode }[] = [
  { id: '开始', icon: <><path d="M0 0h14v14H0z" fill="#2fb4ee" /><path d="M16 0h14v14H16zM0 16h14v14H0z" fill="#1d98e2" /><path d="M16 16h14v14H16z" fill="#0b7ad6" /></> },
  { id: '搜索', icon: <><path d="M21 22l7 7" stroke="#1c6fc2" strokeWidth="4" /><circle cx="14" cy="13" r="12" fill="#dff1fc" stroke="#2a85d6" strokeWidth="3" /><circle cx="14" cy="13" r="8" fill="#45b4ee" /><path d="M6 13h16M14 5v16M10 6q-3 7 0 14M18 6q3 7 0 14" stroke="#a8dcf8" fill="none" /></> },
  { id: '任务视图', icon: <><path d="M0 9h23v20H0z" fill="#1c1826" /><path d="M0 9h9v12l-9 7z" fill="#4a1c38" /><path d="M8 1h22v20H8z" fill="#f2f2f2" /><path d="M8 9h15v12H8z" fill="#aaa8a8" /></> },
  { id: '文件资源管理器', icon: <><path d="M0 2h10l3 3h17v6H0z" fill="#d58a2a" /><path d="M0 7h30v22H0z" fill="#fecb3e" /><path d="M30 12v17H15z" fill="#fdb827" /><path d="M5 29v-5q0-3 3-3h14q3 0 3 3v5z" fill="#0f78d0" /><path d="M10 26h10" stroke="#064a94" strokeWidth="2" /></> },
  { id: 'Edge', icon: <><circle cx="15" cy="15" r="15" fill="#1170c5" /><path d="M2 8C10-5 31-1 30 15c-1 6-9 6-11 3 3-8-7-10-17-10z" fill="#2cb9df" /><path d="M20 1c9 3 11 12 9 17-3 4-9 2-10 0 3-5 1-9-3-12z" fill="#4fd07c" /><path d="M12 17c-1 7 8 11 15 8 1-1 1 0 0 1-8 7-20 1-19-8 0-4 3-7 7-7-2 1-3 3-3 6z" fill="#0a4596" /><path d="M13 14c2-4 7-1 6 4 2 4 7 3 9 1-5 7-16 2-15-5z" fill="#f5e3e8" /></> },
  { id: '商店', icon: <><path d="M9 7V2h12v5" stroke="#2fb4ee" strokeWidth="2" fill="none" /><path d="M0 6h30v20a4 4 0 0 1-4 4H4a4 4 0 0 1-4-4z" fill="#0d4f9e" /><path d="M30 12v14a4 4 0 0 1-4 4H8z" fill="#253473" /><path d="M9 12h6v5H9z" fill="#e23c25" /><path d="M16 12h6v5h-6z" fill="#7cb518" /><path d="M9 18h6v5H9z" fill="#3bb4ef" /><path d="M16 18h6v5h-6z" fill="#fbbc2c" /></> },
  { id: '邮件', icon: <><path d="M0 10L15 1l15 9v6H0z" fill="#0b5aa8" /><path d="M0 10l15 10 15-10v19H0z" fill="#2a9be4" /><path d="M3 10h24L15 19z" fill="#fff" /><path d="M30 10v19H4z" fill="#1683d4" opacity=".6" /></> },
  { id: 'Firefox', icon: <><path d="M1 15C1 9 3 8 4 4l4 4 5-4 2 2 4-6 3 6 3 1c7 9 4 23-10 23C6 30 1 23 1 15z" fill="#ff8a1f" /><path d="M19 0c1 9 6 9 5 17-1 5-8 5-12 4L2 19c2 7 7 11 13 11 12 0 17-14 10-23z" fill="#fdc23c" /><path d="M2 17c4 6 13 7 21 4-2 8-16 11-21-4z" fill="#e2284e" /><circle cx="15" cy="14" r="5" fill="#7253b4" /><path d="M9 10l6-3 2 3-4 2z" fill="#ff4fa8" /></> },
  { id: 'QQ音乐', state: 'open', icon: <MusicIcon size={30} /> },
  { id: 'Multisim', state: 'active', icon: null },
  { id: '音量', state: 'open', icon: <><circle cx="15" cy="15" r="15" fill="#ffa85a" /><path d="M5 12v6h4l6 5V7l-6 5zM18 11q3 4 0 8M21 7q6 8 0 16" fill="none" stroke="#fff" strokeWidth="2" /></> },
];

const Taskbar = () => (
  <div className="relative flex h-[60px] shrink-0 items-center bg-[linear-gradient(90deg,#e4ebf7_0%,#e9e6f5_18%,#f2e4ee_25%,#f7e3e5_32%,#f7e3e5_74%,#f3e4ec_80%,#eae5f4_87%,#e3eaf7_96%)]">
    <div className="flex flex-1 items-center pl-[26px]">
      <div className="relative h-[34px] w-[39px]">
        <svg width="30" height="22" className="mt-[10px]">
          <path d="M6 21a6 6 0 0 1 0-12A10 10 0 0 1 24 9a6 6 0 0 1 0 12z" fill="#78b0ea" />
          <path d="M6 17a6 6 0 0 1 6-6 8 8 0 0 1 12 1q4 5-1 8H8z" fill="#c3dcf6" />
        </svg>
        <span className="absolute -top-1 left-[13px] flex size-5 items-center justify-center rounded-full bg-[#d93025] text-[13px] text-white">1</span>
      </div>
      <div className="text-[15px] leading-5">
        <div>16°C</div>
        <div className="text-[#555]">多云</div>
      </div>
    </div>
    <div className="flex gap-[7px]">
      {apps.map(a => (
        <button
          key={a.id}
          aria-label={a.id}
          className={`relative flex size-12 items-center justify-center rounded-md ${a.state === 'active' ? 'bg-[#f8f5f8] shadow-sm' : ''}`}
        >
          {a.icon ? <svg width="30" height="30" viewBox="0 0 30 30">{a.icon}</svg> : <AppLogo size={28} />}
          {a.state && (
            <span className={`absolute bottom-0 h-1 rounded-full ${a.state === 'active' ? 'w-5 bg-[#0a7ad6]' : 'w-2 bg-[#888]'}`} />
          )}
        </button>
      ))}
    </div>
    <div className="flex flex-1 items-center justify-end pr-[25px] text-[#1b1b1b]">
      <svg width="16" height="10" fill="none" stroke="#111" strokeWidth="1.5" className="mr-3"><path d="M0 9l8-8 8 8" /></svg>
      <MusicIcon size={20} />
      <svg width="20" height="20" className="ml-3">
        <ellipse cx="8" cy="8" rx="6" ry="8" fill="#111" />
        <ellipse cx="8" cy="14" rx="7" ry="5" fill="#111" />
        <ellipse cx="8" cy="14" rx="4" ry="4" fill="#fff" />
        <path d="M2 10q6 3 12 0v3q-6 2-12 0z" fill="#e02020" />
        <path d="M6 4h1v3H6zM9 4h1v3H9z" fill="#fff" />
        <circle cx="14" cy="14" r="6" fill="#ffa040" />
        <path d="M11 13h6M11 15.5h6" stroke="#fff" />
      </svg>
      <svg width="20" height="20" fill="none" stroke="#111" className="ml-2">
        <path d="M1 8a9 9 0 0 1 17-3M18 0v6h-6M2 19v-6h6M2 14q2 5 8 5" strokeWidth="1.5" />
        <circle cx="15" cy="15" r="5" fill="#0a7ad6" stroke="none" />
      </svg>
      <span className="ml-[15px] text-[18px]">英</span>
      <svg width="20" height="16" fill="none" stroke="#111" strokeWidth="1.5" className="ml-[22px]">
        <path d="M1 6q9-9 18 0M4 9q6-6 12 0M7 12q3-3 6 0" />
        <circle cx="10" cy="14" r="1" fill="#111" />
      </svg>
      <svg width="19" height="14" fill="none" stroke="#111" strokeWidth="1.5" className="ml-[10px]">
        <path d="M1 5v5h3l4 3V1L4 5zM12 4l6 6M18 4l-6 6" />
      </svg>
      <svg width="20" height="12" className="ml-[11px]">
        <rect x="1" y="1" width="16" height="10" rx="2" fill="none" stroke="#111" strokeWidth="1.5" />
        <path d="M3 3h10v6H3zM18 4h2v4h-2z" fill="#111" />
      </svg>
      <div className="ml-5 text-right text-[14px] leading-5">
        <div>16:34</div>
        <div>2022/10/26</div>
      </div>
      <span className="ml-[10px] flex size-5 items-center justify-center rounded-full bg-[#0a7ad6] text-[13px] text-white">2</span>
    </div>
    <span className="pointer-events-none absolute right-[14px] bottom-2 font-['Roboto',sans-serif] text-[19px] leading-[22px] text-white/70 [text-shadow:1px_1px_1px_#666]">
      CSDN @fan yuan yuan
    </span>
  </div>
);

const App: React.FC = () => (
  <div className="flex h-screen flex-col overflow-hidden bg-[#efefef] font-['Noto_Sans','Noto_Sans_CJK_SC',sans-serif] text-black">
    <TitleBar />
    <MenuBar />
    <Toolbars />
    <div className="flex min-h-0 flex-1">
      <DesignToolbox />
      <Workspace />
      <InstrumentBar />
    </div>
    <Spreadsheet />
    <StatusBar />
    <Taskbar />
  </div>
);

export default App;
